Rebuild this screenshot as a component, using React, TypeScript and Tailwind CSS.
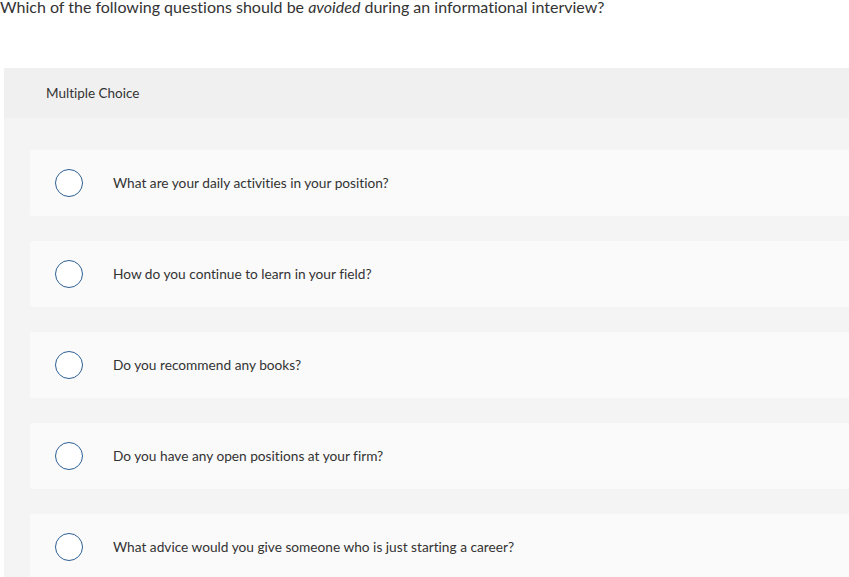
import React from "react";

const options = [
  "What are your daily activities in your position?",
  "How do you continue to learn in your field?",
  "Do you recommend any books?",
  "Do you have any open positions at your firm?",
  "What advice would you give someone who is just starting a career?",
];

export default function App() {
  return (
    <div className="w-[849px] h-[577px] overflow-hidden bg-white text-[#333333] [font-variant-ligatures:none]" style={{ fontFamily: "Lato, 'Open Sans', sans-serif" }}>
      <div className="-mt-[3px] text-[16px] leading-[20px] text-[#333333]">
        Which of the following questions should be <em>avoided</em> during an informational interview?
      </div>
      <div className="mt-[51px] ml-[4px] w-[900px] bg-[#f4f4f4]">
        <div className="h-[50px] bg-[#f0f0f0] pl-[42px] flex items-center text-[13.5px]">
          Multiple Choice
        </div>
        <div className="pt-[32px] pl-[26px] flex flex-col gap-[25px]">
          {options.map((o) => (
            <div key={o} className="h-[66px] bg-[#fafafa] rounded-[3px] flex items-center">
              <div className="ml-[25px] w-[28px] h-[28px] rounded-full border-[1.5px] border-[#2d5f94] bg-white shrink-0" />
              <div className="ml-[30px] text-[13.7px] pt-[1px]">{o}</div>
            </div>
          ))}
        </div>
      </div>
    </div>
  );
}
